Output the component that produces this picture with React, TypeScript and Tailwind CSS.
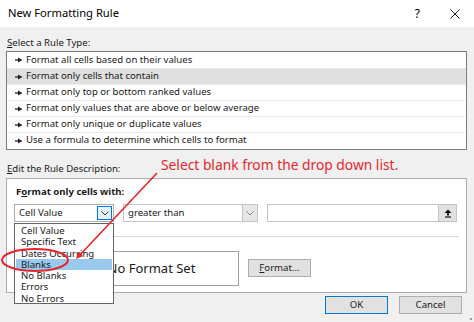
import React from "react";

const rules = [
  "Format all cells based on their values",
  "Format only cells that contain",
  "Format only top or bottom ranked values",
  "Format only values that are above or below average",
  "Format only unique or duplicate values",
  "Use a formula to determine which cells to format",
];

const options = ["Cell Value", "Specific Text", "Dates Occurring", "Blanks", "No Blanks", "Errors", "No Errors"];

function Pointer() {
  return (
    <svg width="8" height="6" viewBox="0 0 8 6" className="shrink-0">
      <path d="M0 3h4" stroke="#222" strokeWidth="1.3" />
      <path d="M3 0.5L7.5 3L3 5.5z" fill="#222" />
    </svg>
  );
}

function Chevron({ color = "#555" }: { color?: string }) {
  return (
    <svg width="8" height="5" viewBox="0 0 8 5">
      <path d="M0.5 0.5L4 4L7.5 0.5" fill="none" stroke={color} strokeWidth="1" />
    </svg>
  );
}

export default function App() {
  return (
    <div
      className="relative w-[474px] h-[322px] overflow-hidden bg-[#f0f0f0] text-[9.6px] text-[#1a1a1a]"
      style={{ fontFamily: '"Noto Sans", "Open Sans", sans-serif' }}
    >
      {/* title bar */}
      <div className="h-[27px] bg-white flex items-center justify-between pl-2 pr-[14px]">
        <span className="text-[11.2px] text-black">New Formatting Rule</span>
        <div className="flex items-center gap-[30px] text-[12px] text-black">
          <span>?</span>
          <svg width="10" height="10" viewBox="0 0 10 10">
            <path d="M0.5 0.5L9.5 9.5M9.5 0.5L0.5 9.5" stroke="#222" strokeWidth="1" />
          </svg>
        </div>
      </div>

      <div className="px-[6px] pr-[7px]">
        <div className="h-[14px] mt-[9px] leading-[14px] pl-[1px]">
          <span className="underline underline-offset-1">S</span>elect a Rule Type:
        </div>
        <div className="mt-[1px] h-[99px] border border-[#7a7a7a] bg-white">
          {rules.map((r, i) => (
            <div
              key={r}
              className={
                "h-[16px] flex items-center gap-[3px] pl-[8px] " +
                (i > 0 ? "border-t border-[#ececec] " : "") +
                (i === 1 ? "bg-[#e0e0e0]" : "")
              }
            >
              <Pointer />
              <span className="whitespace-nowrap">{r}</span>
            </div>
          ))}
        </div>

        <div className="h-[14px] mt-[12px] leading-[14px] pl-[1px]">
          <span className="underline underline-offset-1">E</span>dit the Rule Description:
        </div>
        <div className="mt-[2px] h-[115px] border border-[#adadad] bg-white px-[7px]">
          <div className="mt-[6px] h-[14px] leading-[14px] pl-[2px] font-bold">
            F<span className="underline underline-offset-1">o</span>rmat only cells with:
          </div>
          <div className="mt-[5px] flex items-center">
            <div className="w-[100px] h-[18px] border border-[#adadad] flex items-center justify-between pl-[4px] pr-[1px]">
              <span>Cell Value</span>
              <div className="w-[15px] h-[14px] border border-[#0078d7] bg-[#e5f1fb] flex items-center justify-center">
                <Chevron color="#333" />
              </div>
            </div>
            <div className="ml-[9px] w-[135px] h-[18px] border border-[#c4c4c4] flex items-center justify-between pl-[4px]">
              <span>greater than</span>
              <div className="w-[16px] h-[18px] border border-[#c4c4c4] bg-[#e6e6e6] flex items-center justify-center -mr-[1px]">
                <Chevron color="#888" />
              </div>
            </div>
            <div className="ml-[9px] w-[190px] h-[18px] border border-[#c4c4c4] flex items-center justify-end">
              <div className="w-[18px] h-[16px] bg-[#e1e1e1] border-l border-[#c4c4c4] flex items-center justify-center">
                <svg width="8" height="9" viewBox="0 0 8 9">
                  <path d="M4 0.5L7.5 4H5v2.5H3V4H0.5z" fill="#111" />
                  <path d="M1 8h6" stroke="#111" strokeWidth="1.2" />
                </svg>
              </div>
            </div>
          </div>
          <div className="mt-[14px] border-t border-[#d9d9d9]" />
          <div className="mt-[14px] flex items-start">
            <div className="ml-[50px] w-[175px] h-[35px] border border-[#a0a0a0] flex items-center justify-center text-[13px]">
              No Format Set
            </div>
            <button className="ml-[9px] mt-[8px] w-[63px] h-[18px] bg-[#e1e1e1] border border-[#adadad] text-[9.6px]">
              <span className="underline underline-offset-1">F</span>ormat...
            </button>
          </div>
        </div>

        <div className="mt-[3px] flex justify-end gap-[11px] pr-[5px]">
          <button className="w-[63px] h-[18px] bg-[#e1e1e1] border-[1.5px] border-[#0078d7] text-[9.6px]">OK</button>
          <button className="w-[63px] h-[18px] bg-[#e1e1e1] border border-[#adadad] text-[9.6px]">Cancel</button>
        </div>
      </div>

      {/* open dropdown list */}
      <div className="absolute left-[14px] top-[223px] w-[100px] h-[81px] bg-white border border-[#646464] px-[1px] py-[1px]">
        {options.map((o, i) => (
          <div
            key={o}
            className={"h-[11.3px] leading-[11.3px] pl-[5px] whitespace-nowrap " + (i === 3 ? "bg-[#99c9ef]" : "")}
          >
            {o}
          </div>
        ))}
      </div>

      {/* annotation */}
      <div className="absolute left-[161px] top-[156px] text-[13.8px] leading-[18px] text-[#e8262d] whitespace-nowrap">
        Select blank from the drop down list.
      </div>
      <svg className="absolute left-0 top-0 pointer-events-none" width="474" height="322" viewBox="0 0 474 322">
        <path d="M157 173L78 257" stroke="#e8262d" strokeWidth="1.6" fill="none" />
        <path d="M76 259L78.5 252L83 256z" fill="#e8262d" />
        <ellipse cx="35" cy="260" rx="33" ry="11" stroke="#e8262d" strokeWidth="2" fill="none" />
      </svg>

      {/* resize grip */}
      <div className="absolute right-[2px] bottom-[2px] w-[2px] h-[2px] bg-[#999]" />
    </div>
  );
}
